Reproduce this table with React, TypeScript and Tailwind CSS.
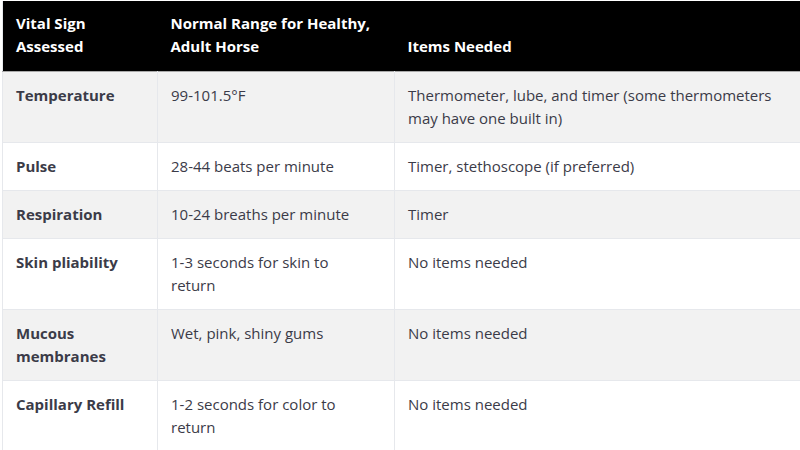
const rows = [
  {
    sign: "Temperature",
    range: "99-101.5°F",
    items: "Thermometer, lube, and timer (some thermometers may have one built in)",
  },
  { sign: "Pulse", range: "28-44 beats per minute", items: "Timer, stethoscope (if preferred)" },
  { sign: "Respiration", range: "10-24 breaths per minute", items: "Timer" },
  { sign: "Skin pliability", range: "1-3 seconds for skin to return", items: "No items needed" },
  { sign: "Mucous membranes", range: "Wet, pink, shiny gums", items: "No items needed" },
  { sign: "Capillary Refill", range: "1-2 seconds for color to return", items: "No items needed" },
];

export default function App() {
  return (
    <div className="h-[450px] w-[800px] overflow-hidden bg-white pl-[2px] pt-[1px] font-['Open_Sans',sans-serif] text-[15px] leading-[23px] text-[#3b3b48]">
      <table className="w-[806px] table-fixed border-collapse border-l border-[#e6e8ec]">
        <colgroup>
          <col className="w-[155px]" />
          <col className="w-[237px]" />
          <col />
        </colgroup>
        <thead>
          <tr className="border-b border-[#a9a9a9] bg-black text-left align-bottom text-white">
            <th className="h-[70px] px-[13px] pb-[13px] font-bold">Vital Sign Assessed</th>
            <th className="px-[13px] pb-[13px] font-bold">Normal Range for Healthy, Adult Horse</th>
            <th className="px-[13px] pb-[13px] font-bold">Items Needed</th>
          </tr>
        </thead>
        <tbody>
          {rows.map((row, i) => (
            <tr key={row.sign} className={`border-b border-[#e6e8ec] align-top ${i % 2 === 0 ? "bg-[#f2f2f2]" : "bg-white"}`}>
              <td className="border-r border-[#e6e8ec] px-[13px] py-[12px] font-bold">{row.sign}</td>
              <td className="border-r border-[#e6e8ec] py-[12px] pl-[13px] pr-[20px]">{row.range}</td>
              <td className="px-[13px] py-[12px]">{row.items}</td>
            </tr>
          ))}
        </tbody>
      </table>
    </div>
  );
}
